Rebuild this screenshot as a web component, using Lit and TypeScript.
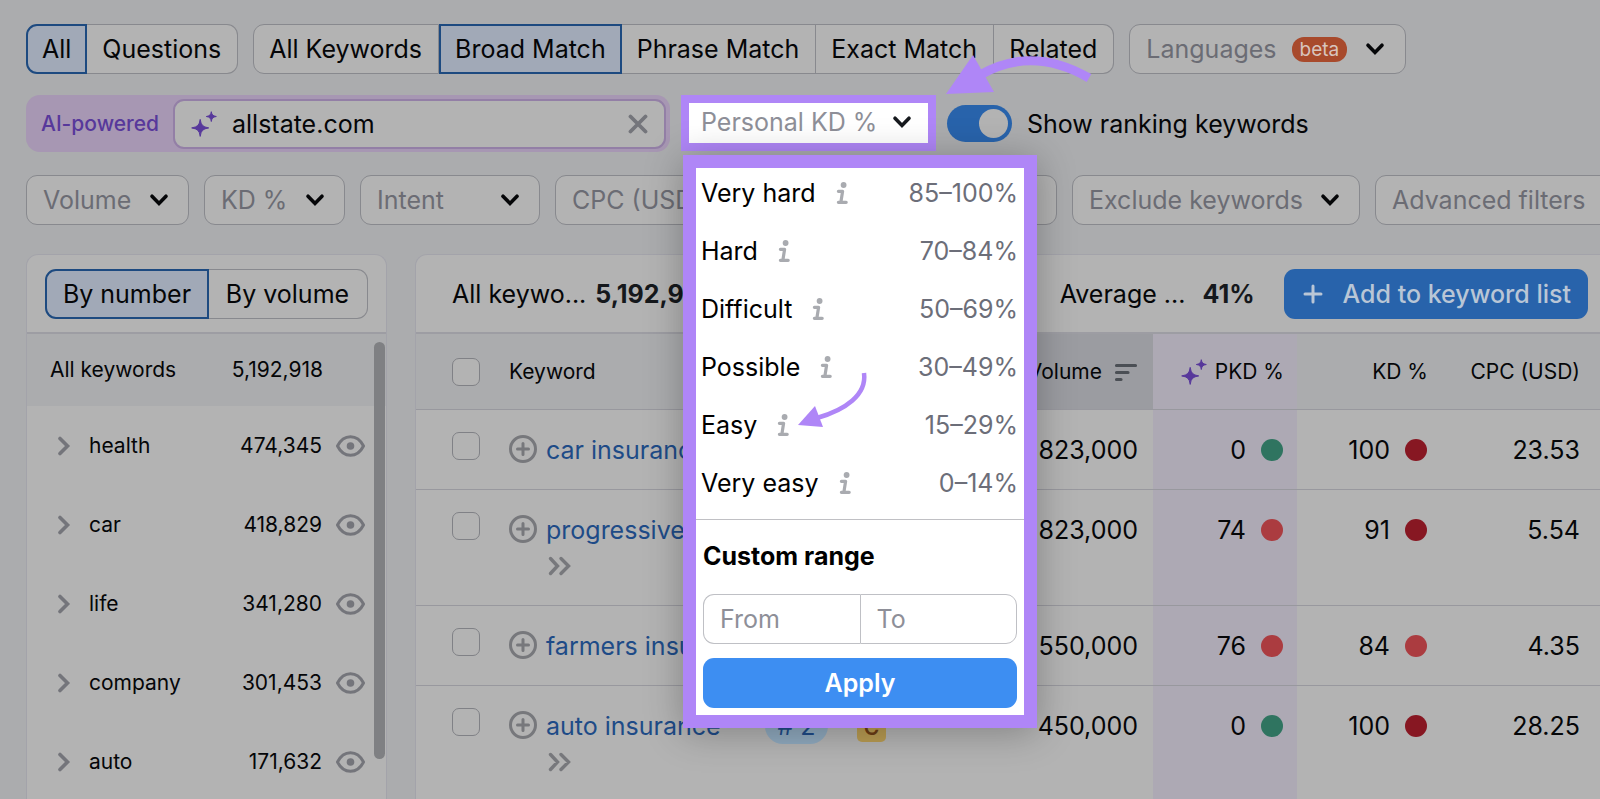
import { LitElement, html, svg, css, nothing } from "lit";
import { customElement, state } from "lit/decorators.js";
import { classMap } from "lit/directives/class-map.js";

type Level = "green" | "red" | "dark";

interface KeywordRow {
  keyword: string;
  more: boolean;
  position: string;
  intent: string;
  volume: string;
  pkd: string;
  pkdLevel: Level;
  kd: string;
  kdLevel: Level;
  cpc: string;
}

const QUESTION_TABS = ["All", "Questions"];
const MATCH_TABS = ["All Keywords", "Broad Match", "Phrase Match", "Exact Match", "Related"];
const FILTERS = ["Volume", "KD %", "Intent", "CPC (USD)", "Include keywords", "Exclude keywords", "Advanced filters"];

const RANGES = [
  ["Very hard", "85–100%"],
  ["Hard", "70–84%"],
  ["Difficult", "50–69%"],
  ["Possible", "30–49%"],
  ["Easy", "15–29%"],
  ["Very easy", "0–14%"],
];

const GROUPS = [
  ["health", "474,345"],
  ["car", "418,829"],
  ["life", "341,280"],
  ["company", "301,453"],
  ["auto", "171,632"],
];

const ROWS: KeywordRow[] = [
  { keyword: "car insurance", more: false, position: "", intent: "", volume: "823,000", pkd: "0", pkdLevel: "green", kd: "100", kdLevel: "dark", cpc: "23.53" },
  { keyword: "progressive", more: true, position: "", intent: "", volume: "823,000", pkd: "74", pkdLevel: "red", kd: "91", kdLevel: "dark", cpc: "5.54" },
  { keyword: "farmers insurance", more: false, position: "", intent: "", volume: "550,000", pkd: "76", pkdLevel: "red", kd: "84", kdLevel: "red", cpc: "4.35" },
  { keyword: "auto insurance", more: true, position: "# 2", intent: "C", volume: "450,000", pkd: "0", pkdLevel: "green", kd: "100", kdLevel: "dark", cpc: "28.25" },
];

const chevronDown = html`<svg class="chevron" width="20" height="14" viewBox="0 0 20 14" aria-hidden="true">
  <path d="M3 3.2 L10 10.4 L17 3.2" fill="none" stroke="currentColor" stroke-width="3.6" stroke-linecap="round" stroke-linejoin="miter" />
</svg>`;

const sparkles = html`<svg class="sparkles" width="26" height="26" viewBox="0 0 26 26" aria-hidden="true">
  ${svg`<g fill="currentColor" stroke="currentColor" stroke-width="1" stroke-linejoin="round">
    <path d="M9.2 8.4 Q9.8 13 11.6 14.5 Q13.2 16.200 17.700 16.9 Q13.200 17.600 11.600 19.300 Q9.800 20.800 9.200 25.400 Q8.600 20.800 6.800 19.300 Q5.200 17.600 0.700 16.900 Q5.200 16.200 6.800 14.500 Q8.600 13 9.200 8.400 Z" />
    <path d="M20.300 0.700 Q20.700 3.200 21.700 4.100 Q22.600 5.100 25.300 5.500 Q22.600 5.900 21.700 6.900 Q20.700 7.800 20.300 10.500 Q19.900 7.800 18.900 6.900 Q18 5.900 15.300 5.500 Q18 5.100 18.900 4.100 Q19.900 3.200 20.300 0.700 Z" />
  </g>`}
</svg>`;

@customElement("app-root")
export class AppRoot extends LitElement {
  @state() private questionTab = "All";
  @state() private matchTab = "Broad Match";
  @state() private groupTab = "By number";
  @state() private menuOpen = true;

  static styles = css`
    :host {
      --page: #abacae;
      --surface: #b3b3b3;
      --edge: #88898e;
      --muted: #6b6c74;
      --ink: #050608;
      --accent: #2863ab;
      --mark: #af86f7;
      --md: 25px;
      --sm: 21px;
      display: block;
      height: 100vh;
      overflow: hidden;
      position: relative;
      background: var(--page);
      color: var(--ink);
      font: 400 var(--md)/36px Inter, "Liberation Sans", sans-serif;
      font-optical-sizing: none;
    }
    *,
    *::before {
      box-sizing: border-box;
    }
    button,
    input,
    select {
      font: inherit;
      color: inherit;
      margin: 0;
    }
    button {
      background: none;
      border: 0;
      padding: 0;
      cursor: pointer;
    }
    svg {
      display: block;
      flex: none;
    }
    .page {
      display: flex;
      flex-direction: column;
      height: 100%;
      padding: 24px 0 0 26px;
    }
    .bar {
      display: flex;
      align-items: center;
      gap: 15px;
      flex: none;
      margin-bottom: 21px;
      white-space: nowrap;
    }
    .bar.search {
      align-items: flex-start;
      gap: 11px;
      margin-bottom: 23px;
    }
    .bar.filters {
      margin-bottom: 29px;
    }

    /* segmented controls */
    .segments {
      display: flex;
      flex: none;
      height: 50px;
    }
    .segments button {
      border: 1px solid var(--edge);
      border-left-width: 0;
      background: var(--surface);
      padding: 0 16px 0 15px;
    }
    .segments button:first-child {
      border-left-width: 1px;
      border-radius: 11px 0 0 11px;
    }
    .segments button:last-child {
      border-radius: 0 11px 11px 0;
    }
    .segments button.on {
      background: #a1a9b7;
      border: 2px solid #1d4a80;
      padding: 0 14px;
    }

    /* drop-down filters */
    .filter {
      display: grid;
      align-items: center;
      flex: none;
      height: 50px;
    }
    .filter select,
    .filter .chevron {
      grid-area: 1 / 1;
    }
    .filter select {
      appearance: none;
      width: 100%;
      height: 50px;
      border: 1px solid var(--edge);
      border-radius: 11px;
      background: var(--surface);
      color: var(--muted);
      padding: 0 56px 0 16px;
    }
    .filter .chevron {
      justify-self: end;
      margin-right: 20px;
      pointer-events: none;
      color: var(--ink);
    }
    .filter.wide {
      width: 180px;
    }
    .languages {
      display: flex;
      align-items: center;
      height: 50px;
      border: 1px solid var(--edge);
      border-radius: 11px;
      background: var(--surface);
      color: var(--muted);
      padding: 0 20px 0 16px;
    }
    .beta {
      margin: 0 18px 0 15px;
      padding: 0 8px;
      border-radius: 12px;
      background: #a84a2c;
      color: #d8c4be;
      font-size: 19px;
      line-height: 25px;
    }
    .languages .chevron {
      color: var(--ink);
    }

    /* domain field */
    .ai {
      display: flex;
      align-items: center;
      width: 644px;
      height: 57px;
      padding: 0 4px 0 15px;
      border-radius: 14px;
      background: #a797b3;
      color: #57389b;
    }
    .ai label {
      flex: none;
      width: 132px;
      font-size: var(--sm);
      font-weight: 500;
    }
    .field {
      display: flex;
      align-items: center;
      flex: 1;
      min-width: 0;
      height: 50px;
      padding: 0 16px;
      border: 2px solid #937fa6;
      border-radius: 11px;
      background: var(--surface);
    }
    .field input {
      flex: 1;
      min-width: 0;
      margin-left: 15px;
      padding: 0;
      border: 0;
      outline: 0;
      background: none;
      color: var(--ink);
    }
    .clear {
      color: #74757b;
    }

    /* personal difficulty menu */
    .pkd {
      position: relative;
      flex: none;
    }
    .pkd-trigger {
      display: flex;
      align-items: center;
      justify-content: space-between;
      width: 255px;
      height: 56px;
      border: 8px solid var(--mark);
      background: #fff;
      color: #8e8f98;
      padding: 0 16px 2px 12px;
    }
    .pkd-trigger .chevron {
      color: #171a1e;
    }
    .menu {
      position: absolute;
      z-index: 2;
      top: 60px;
      left: 2px;
      width: 354px;
      border: 13px solid var(--mark);
      background: #fff;
      box-shadow: 0 4px 36px rgba(0, 0, 0, 0.28);
      color: #000;
    }
    .ranges {
      list-style: none;
      margin: 0;
      padding: 0 0 11px;
      border-bottom: 1px solid #c0c0c4;
      display: grid;
      gap: 8px;
    }
    .ranges button {
      display: flex;
      align-items: center;
      width: 100%;
      height: 50px;
      padding: 0 6px 0 5px;
    }
    .ranges svg {
      margin-left: 19px;
      color: #a9abb0;
    }
    .ranges .span {
      margin-left: auto;
      color: #6c6e79;
    }
    .custom {
      display: grid;
      grid-template-columns: minmax(0, 1fr);
      padding: 18px 7px 7px;
    }
    .custom h2 {
      margin: 0 0 20px;
      font-size: var(--md);
      font-weight: 700;
      line-height: 36px;
    }
    .pair {
      display: flex;
      margin-bottom: 14px;
    }
    .pair input {
      flex: 1;
      min-width: 0;
      height: 50px;
      border: 1px solid #bfc0c5;
      background: #fff;
      padding: 0 16px;
      outline: 0;
    }
    .pair input::placeholder {
      color: #8e8f98;
      opacity: 1;
    }
    .pair input:first-child {
      border-radius: 11px 0 0 11px;
      border-right: 0;
    }
    .pair input:last-child {
      border-radius: 0 11px 11px 0;
    }
    .apply {
      height: 50px;
      border-radius: 11px;
      background: #3d8ef2;
      color: #fff;
      font-weight: 600;
    }

    /* toggle */
    .toggle {
      display: flex;
      align-items: center;
      gap: 15px;
      height: 57px;
    }
    .toggle input {
      appearance: none;
      width: 65px;
      height: 37px;
      border-radius: 19px;
      background: var(--accent);
      padding: 4px;
      display: flex;
    }
    .toggle input::before {
      content: "";
      width: 29px;
      height: 29px;
      border-radius: 50%;
      background: var(--surface);
    }
    .toggle input:checked {
      justify-content: flex-end;
    }

    /* panels */
    .panels {
      display: flex;
      gap: 28px;
      flex: 1;
      min-height: 0;
    }
    .panel {
      background: var(--surface);
      border: 1px solid #a3a3aa;
      border-bottom: 0;
      border-radius: 12px 12px 0 0;
      overflow: hidden;
    }
    .panel-head {
      display: flex;
      align-items: center;
      height: 79px;
      border-bottom: 2px solid #9d9da3;
      white-space: nowrap;
    }
    .groups {
      flex: none;
      width: 361px;
    }
    .groups .panel-head {
      padding: 0 18px;
    }
    .groups .segments {
      flex: 1;
    }
    .groups .segments button {
      flex: auto;
    }
    .group-list {
      position: relative;
      font-size: var(--sm);
    }
    .group-list ul {
      list-style: none;
      margin: 0;
      padding: 0;
    }
    .total,
    .group {
      display: grid;
      grid-template-columns: 1fr auto 28px;
      align-items: center;
      column-gap: 14px;
      padding: 0 21px 0 23px;
    }
    .total {
      height: 72px;
      background: var(--page);
    }
    .group {
      grid-template-columns: 14px 1fr auto 29px;
      height: 79px;
      padding-left: 30px;
    }
    .group > button {
      color: #74757b;
    }
    .group .name {
      padding-left: 4px;
    }
    .scroll-thumb {
      position: absolute;
      top: 8px;
      right: 1px;
      width: 11px;
      height: 417px;
      border-radius: 6px;
      background: #7f8083;
    }

    .results {
      flex: 1;
      min-width: 0;
      border-right: 0;
      border-top-right-radius: 0;
    }
    .results .panel-head {
      padding: 0 12px 0 36px;
    }
    .results strong {
      color: #15181c;
      font-weight: 700;
    }
    .count strong {
      margin-left: 9px;
    }
    .average {
      margin-left: auto;
    }
    .average strong {
      margin: 0 29px 0 17px;
    }
    .add {
      display: flex;
      align-items: center;
      gap: 20px;
      height: 50px;
      padding: 0 17px 0 19px;
      border-radius: 11px;
      background: var(--accent);
      color: #b9c6d6;
      font-weight: 500;
    }
    table {
      width: 100%;
      table-layout: fixed;
      border-collapse: separate;
      border-spacing: 0;
    }
    .c-check {
      width: 93px;
    }
    .c-pos {
      width: 92px;
    }
    .c-intent {
      width: 80px;
    }
    .c-volume {
      width: 221px;
    }
    .c-kd {
      width: 144px;
    }
    .c-cpc {
      width: 159px;
    }
    th {
      height: 76px;
      padding: 0;
      border-bottom: 1px solid #98989e;
      background: var(--page);
      font-size: var(--sm);
      font-weight: 400;
      text-align: left;
    }
    td {
      padding: 22px 0 21px;
      border-bottom: 1px solid #98989e;
      vertical-align: top;
      line-height: 36px;
    }
    .end {
      display: flex;
      align-items: center;
      justify-content: flex-end;
      padding-right: 15px;
    }
    th .end {
      gap: 12px;
    }
    td .end {
      gap: 15px;
    }
    td .pad {
      padding-right: 14px;
    }
    .end.far {
      padding-right: 20px;
    }
    th .sort {
      color: #4b4f55;
    }
    th.sorted {
      background: #9b9ca1;
    }
    th .sparkles {
      color: #57389b;
    }
    th .pad {
      gap: 8px;
      padding-right: 13px;
    }
    .tint {
      background: #ada9b4;
    }
    .check {
      appearance: none;
      display: block;
      width: 28px;
      height: 28px;
      margin: 0 0 0 36px;
      border: 1px solid #808186;
      border-radius: 7px;
      background: var(--surface);
    }
    .keyword {
      display: grid;
      grid-template-columns: 28px auto;
      justify-content: start;
      column-gap: 9px;
      white-space: nowrap;
    }
    .keyword button {
      color: #77787c;
      display: grid;
      align-content: center;
      height: 34px;
    }
    .keyword .more {
      grid-column: 2;
      height: 36px;
      justify-self: start;
      padding-left: 2px;
    }
    a {
      color: #1e4b87;
      text-decoration: none;
    }
    .position {
      display: inline-block;
      width: 63px;
      margin-left: 5px;
      border-radius: 18px;
      background: #8fa9be;
      color: #1e4b87;
      text-align: center;
    }
    .intent {
      display: inline-block;
      width: 29px;
      margin-left: 5px;
      border-radius: 5px;
      background: #b89b52;
      color: #6b3c14;
      text-align: center;
      font-size: var(--sm);
      font-weight: 600;
      line-height: 29px;
    }
    .dot {
      width: 22px;
      height: 22px;
      border-radius: 50%;
    }
    .dot.green {
      background: #2f7460;
    }
    .dot.red {
      background: #ab3c40;
    }
    .dot.dark {
      background: #871722;
    }

    /* hand-drawn pointers lying over the page */
    .pointers {
      position: absolute;
      z-index: 3;
      top: 0;
      left: 0;
      pointer-events: none;
    }
  `;

  private segments(items: string[], active: string, pick: (v: string) => void, label: string) {
    return html`<div class="segments" role="group" aria-label=${label}>
      ${items.map(
        (item) => html`<button
          class=${classMap({ on: item === active })}
          aria-pressed=${item === active ? "true" : "false"}
          @click=${() => pick(item)}
        >${item}</button>`
      )}
    </div>`;
  }

  private menu() {
    return html`<div class="menu">
      <ul class="ranges">
        ${RANGES.map(
          ([name, span]) => html`<li>
            <button>
              <span>${name}</span>
              <svg width="14" height="24" viewBox="0 0 14 24" aria-hidden="true">
                <circle cx="8.600" cy="4" r="2.900" fill="currentColor" />
                <path d="M3.400 10.300 H7.600 L5.900 21 M3.400 21.300 H11.200" fill="none" stroke="currentColor" stroke-width="3.200" stroke-linecap="round" stroke-linejoin="round" />
              </svg>
              <span class="span">${span}</span>
            </button>
          </li>`
        )}
      </ul>
      <div class="custom">
        <h2>Custom range</h2>
        <div class="pair">
          <input type="text" placeholder="From" aria-label="From" />
          <input type="text" placeholder="To" aria-label="To" />
        </div>
        <button class="apply" @click=${() => (this.menuOpen = false)}>Apply</button>
      </div>
    </div>`;
  }

  private row(r: KeywordRow) {
    return html`<tr>
      <td><input class="check" type="checkbox" aria-label=${r.keyword} /></td>
      <td>
        <div class="keyword">
          <button aria-label="Add keyword">
            <svg width="28" height="28" viewBox="0 0 28 28" aria-hidden="true">
              <circle cx="14" cy="14" r="12.500" fill="none" stroke="currentColor" stroke-width="3" />
              <path d="M14 8.500 V19.500 M8.500 14 H19.500" stroke="currentColor" stroke-width="3" stroke-linecap="round" />
            </svg>
          </button>
          <a href="#">${r.keyword}</a>
          ${r.more
            ? html`<button class="more" aria-label="Open details">
                <svg width="23" height="20" viewBox="0 0 23 20" aria-hidden="true">
                  <path d="M2.500 2.500 L9.500 10 L2.500 17.500 M13 2.500 L20.500 10 L13 17.500" fill="none" stroke="currentColor" stroke-width="3.400" stroke-linecap="round" />
                </svg>
              </button>`
            : nothing}
        </div>
      </td>
      <td>${r.position ? html`<span class="position">${r.position}</span>` : nothing}</td>
      <td>${r.intent ? html`<span class="intent">${r.intent}</span>` : nothing}</td>
      <td><div class="end">${r.volume}</div></td>
      <td class="tint"><div class="end pad">${r.pkd}<span class="dot ${r.pkdLevel}"></span></div></td>
      <td><div class="end pad">${r.kd}<span class="dot ${r.kdLevel}"></span></div></td>
      <td><div class="end far">${r.cpc}</div></td>
    </tr>`;
  }

  render() {
    return html`
      <main class="page">
        <div class="bar">
          ${this.segments(QUESTION_TABS, this.questionTab, (v) => (this.questionTab = v), "Questions")}
          ${this.segments(MATCH_TABS, this.matchTab, (v) => (this.matchTab = v), "Match type")}
          <button class="languages" aria-haspopup="listbox">
            Languages <span class="beta">beta</span> ${chevronDown}
          </button>
        </div>

        <div class="bar search">
          <div class="ai">
            <label for="domain">AI-powered</label>
            <div class="field">
              ${sparkles}
              <input id="domain" type="text" .value=${"allstate.com"} />
              <button class="clear" aria-label="Clear">
                <svg width="20" height="20" viewBox="0 0 20 20" aria-hidden="true">
                  <path d="M2.500 2.500 L17.500 17.500 M17.500 2.500 L2.500 17.500" stroke="currentColor" stroke-width="3.800" stroke-linecap="round" />
                </svg>
              </button>
            </div>
          </div>
          <div class="pkd">
            <button class="pkd-trigger" aria-haspopup="true" aria-expanded=${this.menuOpen ? "true" : "false"} @click=${() => (this.menuOpen = !this.menuOpen)}>
              Personal KD % ${chevronDown}
            </button>
            ${this.menuOpen ? this.menu() : nothing}
          </div>
          <label class="toggle"><input type="checkbox" role="switch" checked />Show ranking keywords</label>
        </div>

        <div class="bar filters">
          ${FILTERS.map(
            (name) => html`<div class=${classMap({ filter: true, wide: name === "Intent" })}>
              <select aria-label=${name}><option>${name}</option></select>
              ${chevronDown}
            </div>`
          )}
        </div>

        <div class="panels">
          <aside class="panel groups">
            <div class="panel-head">
              ${this.segments(["By number", "By volume"], this.groupTab, (v) => (this.groupTab = v), "Sort groups")}
            </div>
            <div class="group-list">
              <div class="total"><span>All keywords</span><span>5,192,918</span></div>
              <ul>
                ${GROUPS.map(
                  ([name, count]) => html`<li class="group">
                    <button aria-label="Expand ${name}">
                      <svg width="14" height="20" viewBox="0 0 14 20" aria-hidden="true">
                        <path d="M3 2.500 L10.500 10 L3 17.500" fill="none" stroke="currentColor" stroke-width="3.600" stroke-linecap="round" />
                      </svg>
                    </button>
                    <span class="name">${name}</span>
                    <span>${count}</span>
                    <button aria-label="Exclude ${name}">
                      <svg width="29" height="22" viewBox="0 0 29 22" aria-hidden="true">
                        <path d="M1.500 11 C4.500 5 9 1.700 14.500 1.700 S24.500 5 27.500 11 C24.500 17 20 20.300 14.500 20.300 S4.500 17 1.500 11 Z" fill="none" stroke="currentColor" stroke-width="3" stroke-linejoin="round" />
                        <circle cx="14.500" cy="11" r="3.800" fill="currentColor" />
                      </svg>
                    </button>
                  </li>`
                )}
              </ul>
              <div class="scroll-thumb"></div>
            </div>
          </aside>

          <section class="panel results">
            <div class="panel-head">
              <span class="count">All keywo...<strong>5,192,918</strong></span>
              <span class="average">Average ...<strong>41%</strong></span>
              <button class="add">
                <svg width="20" height="20" viewBox="0 0 20 20" aria-hidden="true">
                  <path d="M10 2 V18 M2 10 H18" stroke="currentColor" stroke-width="3" stroke-linecap="round" />
                </svg>
                Add to keyword list
              </button>
            </div>
            <table>
              <colgroup>
                <col class="c-check" /><col /><col class="c-pos" /><col class="c-intent" />
                <col class="c-volume" /><col class="c-kd" /><col class="c-kd" /><col class="c-cpc" />
              </colgroup>
              <thead>
                <tr>
                  <th><input class="check" type="checkbox" aria-label="Select all" /></th>
                  <th>Keyword</th>
                  <th></th>
                  <th></th>
                  <th class="sorted">
                    <div class="end">
                      Volume
                      <svg class="sort" width="24" height="20" viewBox="0 0 24 20" aria-hidden="true">
                        <path d="M2.500 3.500 H21.500 M2.500 10.500 H14 M2.500 17.500 H7" stroke="currentColor" stroke-width="3.200" stroke-linecap="round" />
                      </svg>
                    </div>
                  </th>
                  <th class="tint"><div class="end pad">${sparkles} PKD %</div></th>
                  <th><div class="end pad">KD %</div></th>
                  <th><div class="end far">CPC (USD)</div></th>
                </tr>
              </thead>
              <tbody>
                ${ROWS.map((r) => this.row(r))}
              </tbody>
            </table>
          </section>
        </div>
      </main>

      <svg class="pointers" width="1120" height="440" viewBox="0 0 1120 440" aria-hidden="true">
        <path d="M980 75 Q1032 45 1089 78" fill="none" stroke="#af86f7" stroke-width="9" />
        <path d="M946 94 L973 55 L994 92 Z" fill="#af86f7" />
        <path d="M864 373 C867 395 845 410 817 418" fill="none" stroke="#af86f7" stroke-width="4.500" />
        <path d="M798 425 L815 406 L823 427 Z" fill="#af86f7" />
      </svg>
    `;
  }
}
